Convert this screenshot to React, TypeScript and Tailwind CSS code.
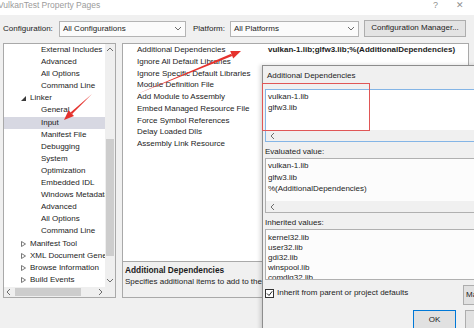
import React from 'react';

const treeRows: { label: string; level: 'leaf' | 'open' | 'closed'; selected?: boolean }[] = [
  { label: 'External Includes', level: 'leaf' },
  { label: 'Advanced', level: 'leaf' },
  { label: 'All Options', level: 'leaf' },
  { label: 'Command Line', level: 'leaf' },
  { label: 'Linker', level: 'open' },
  { label: 'General', level: 'leaf' },
  { label: 'Input', level: 'leaf', selected: true },
  { label: 'Manifest File', level: 'leaf' },
  { label: 'Debugging', level: 'leaf' },
  { label: 'System', level: 'leaf' },
  { label: 'Optimization', level: 'leaf' },
  { label: 'Embedded IDL', level: 'leaf' },
  { label: 'Windows Metadata', level: 'leaf' },
  { label: 'Advanced', level: 'leaf' },
  { label: 'All Options', level: 'leaf' },
  { label: 'Command Line', level: 'leaf' },
  { label: 'Manifest Tool', level: 'closed' },
  { label: 'XML Document Generator', level: 'closed' },
  { label: 'Browse Information', level: 'closed' },
  { label: 'Build Events', level: 'closed' },
];

const gridRows = [
  'Additional Dependencies',
  'Ignore All Default Libraries',
  'Ignore Specific Default Libraries',
  'Module Definition File',
  'Add Module to Assembly',
  'Embed Managed Resource File',
  'Force Symbol References',
  'Delay Loaded Dlls',
  'Assembly Link Resource',
];

const Chevron: React.FC<{ dir: 'up' | 'down' | 'left' | 'right' }> = ({ dir }) => {
  const d = {
    up: 'M1 5 L4 2 L7 5',
    down: 'M1 2 L4 5 L7 2',
    left: 'M5 1 L2 4 L5 7',
    right: 'M2 1 L5 4 L2 7',
  }[dir];
  return (
    <svg width="8" height="8" viewBox="0 0 8 8" className="shrink-0">
      <path d={d} fill="none" stroke="#6d6d6d" strokeWidth="1" />
    </svg>
  );
};

const Combo: React.FC<{ text: string; width: string }> = ({ text, width }) => (
  <div className={`${width} h-[16px] border border-[#b4b4b4] bg-[#fbfbfb] flex items-center justify-between pl-[3px] pr-[3px]`}>
    <span>{text}</span>
    <Chevron dir="down" />
  </div>
);

export default function App() {
  return (
    <div className="relative w-[474px] h-[328px] overflow-hidden bg-[#f0f0f0] text-[8px] text-[#1c1c1c] font-['Liberation_Sans',Arial,sans-serif]">
      {/* Title bar */}
      <div className="h-[15px] bg-white flex items-start justify-between pr-[10px]">
        <span className="-ml-[2px] leading-[11px] text-[#9b9b9b] text-[8.5px]">VulkanTest Property Pages</span>
        <div className="flex gap-[18px] leading-[11px] text-[#8f8f8f] text-[9px]">
          <span>?</span>
          <span>✕</span>
        </div>
      </div>

      {/* Configuration row */}
      <div className="mt-[5px] h-[17px] flex items-center pl-[3px]">
        <span className="w-[56px]">Configuration:</span>
        <Combo text="All Configurations" width="w-[127px]" />
        <span className="ml-[7px] w-[37px]">Platform:</span>
        <Combo text="All Platforms" width="w-[129px]" />
        <div className="ml-[5px] w-[102px] h-[17px] border border-[#adadad] bg-[#e3e3e3] flex items-center justify-center -mt-[1px]">
          Configuration Manager...
        </div>
      </div>

      {/* Body */}
      <div className="mt-[6px] flex px-[3px] gap-[6px] h-[255px]">
        {/* Tree */}
        <div className="w-[113px] h-full border border-[#a9a9a9] bg-white flex flex-col">
          <div className="flex flex-1 min-h-0">
            <div className="flex-1 overflow-hidden">
              {treeRows.map((r, i) => (
                <div
                  key={i}
                  className={`h-[12.1px] leading-[12.1px] whitespace-nowrap flex items-center ${r.selected ? 'bg-[#d7d8e2]' : ''}`}
                >
                  {r.level === 'leaf' ? (
                    <span className="pl-[37px]">{r.label}</span>
                  ) : (
                    <>
                      <span className="pl-[17px] w-[26px] shrink-0 flex items-center">
                        {r.level === 'open' ? (
                          <svg width="5" height="5" viewBox="0 0 5 5">
                            <path d="M5 0 L5 5 L0 5 Z" fill="#3a3a3a" />
                          </svg>
                        ) : (
                          <svg width="5" height="6" viewBox="0 0 5 6">
                            <path d="M0.5 0.5 L4.5 3 L0.5 5.5 Z" fill="none" stroke="#6a6a6a" strokeWidth="0.9" />
                          </svg>
                        )}
                      </span>
                      <span className="shrink-0">{r.label}</span>
                    </>
                  )}
                </div>
              ))}
            </div>
            <div className="w-[10px] bg-[#efefef] flex flex-col items-center">
              <div className="h-[12px] flex items-center">
                <Chevron dir="up" />
              </div>
              <div className="h-[83px]" />
              <div className="w-[8px] h-[117px] bg-[#cdcdcd]" />
              <div className="flex-1" />
              <div className="h-[12px] flex items-center">
                <Chevron dir="down" />
              </div>
            </div>
          </div>
          <div className="h-[10px] flex bg-[#efefef]">
            <div className="flex-1 flex items-center pl-[1px]">
              <Chevron dir="left" />
              <div className="ml-[2px] w-[66px] h-[8px] bg-[#cdcdcd]" />
              <div className="flex-1" />
              <Chevron dir="right" />
            </div>
            <div className="w-[10px]" />
          </div>
        </div>

        {/* Property grid + description */}
        <div className="w-[347px] h-full flex flex-col">
          <div className="h-[219px] border border-[#a9a9a9] bg-white overflow-hidden">
            {gridRows.map((g, i) => (
              <div key={i} className="h-[11.75px] leading-[11.75px] flex whitespace-nowrap pl-[14px]">
                <span className="w-[131px] shrink-0 overflow-visible">{g}</span>
                {i === 0 && <span className="font-bold">vulkan-1.lib;glfw3.lib;%(AdditionalDependencies)</span>}
              </div>
            ))}
          </div>
          <div className="h-[36px] border border-t-0 border-[#a9a9a9] bg-[#f0f0f0] pl-[2px] pt-[3px] leading-[11px] whitespace-nowrap">
            <div className="font-bold text-[8.3px]">Additional Dependencies</div>
            <div>Specifies additional items to add to the link command line</div>
          </div>
        </div>
      </div>

      {/* Additional Dependencies popup */}
      <div className="absolute left-[262px] top-[65px] w-[230px] h-[280px] bg-[#f0f0f0] border border-[#8d8d8d] shadow-[-2px_0_4px_rgba(0,0,0,0.15)] pl-[2px]">
        <div className="pt-[4px] pl-[2px] leading-[12px]">Additional Dependencies</div>
        <div className="mt-[7px] h-[53px] border border-[#84b5e6] bg-white flex flex-col">
          <div className="flex-1 pl-[2px] pt-[1px] leading-[11px]">
            <div>vulkan-1.lib</div>
            <div>glfw3.lib</div>
          </div>
          <div className="h-[11px] bg-[#f0f0f0] flex items-center pl-[3px]">
            <Chevron dir="left" />
          </div>
        </div>
        <div className="mt-[4px] leading-[12px]">Evaluated value:</div>
        <div className="h-[55px] border border-[#b0b0b0] bg-[#fcfcfc] flex flex-col">
          <div className="flex-1 pl-[2px] pt-[1px] leading-[11.5px]">
            <div>vulkan-1.lib</div>
            <div>glfw3.lib</div>
            <div>%(AdditionalDependencies)</div>
          </div>
          <div className="h-[11px] bg-[#f0f0f0] flex items-center pl-[3px]">
            <Chevron dir="left" />
          </div>
        </div>
        <div className="mt-[4px] leading-[12px]">Inherited values:</div>
        <div className="h-[51px] border border-[#b0b0b0] bg-[#fcfcfc] overflow-hidden pl-[2px] pt-[3px] leading-[10px]">
          <div>kernel32.lib</div>
          <div>user32.lib</div>
          <div>gdi32.lib</div>
          <div>winspool.lib</div>
          <div>comdlg32.lib</div>
        </div>
        <div className="mt-[5px] flex items-start">
          <div className="w-[198px] shrink-0 flex items-center mt-[3px] h-[10px]">
            <div className="w-[9px] h-[9px] border border-[#333] bg-white flex items-center justify-center">
              <svg width="7" height="7" viewBox="0 0 7 7">
                <path d="M1 3.5 L3 5.5 L6.2 1.3" fill="none" stroke="#222" strokeWidth="1" />
              </svg>
            </div>
            <span className="ml-[3px]">Inherit from parent or project defaults</span>
          </div>
          <div className="w-[60px] shrink-0 h-[20px] border border-[#adadad] bg-[#e1e1e1] flex items-center pl-[2px]">
            Macros&gt;&gt;
          </div>
        </div>
        <div className="mt-[5px] flex">
          <div className="ml-[148px] shrink-0 w-[43px] h-[20px] border border-[#0078d7] bg-[#e1e1e1] flex items-center justify-center">
            OK
          </div>
          <div className="ml-[9px] shrink-0 w-[43px] h-[20px] border border-[#adadad] bg-[#e1e1e1]" />
        </div>
      </div>

      {/* Red annotation box */}
      <div className="absolute left-[262px] top-[83px] w-[108px] h-[48px] border border-[#e05656]" />

      {/* Red annotation arrows */}
      <svg className="absolute left-0 top-0 pointer-events-none" width="474" height="328" viewBox="0 0 474 328">
        <polygon points="137,94 232.2,55.9 231.2,53.7" fill="#e5322d" />
        <polygon points="241,51 233.2,58.5 230.2,51.1" fill="#e5322d" />
        <polygon points="92,94 72.1,114.1 70.5,112.4" fill="#e5322d" />
        <polygon points="64,120 74,116.1 68.6,110.3" fill="#e5322d" />
      </svg>
    </div>
  );
}
